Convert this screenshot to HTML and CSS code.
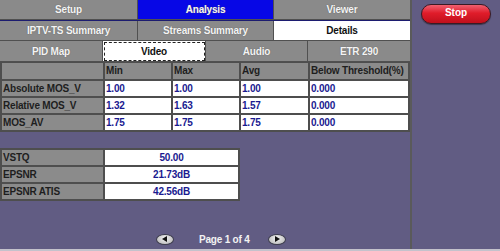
FILE: index.html
```html
<!DOCTYPE html>
<html lang="en">
<head>
  <title>Video Analysis</title>
  <link rel="stylesheet" href="styles.css">
</head>
<body>
  <div class="screen">
    <div class="panel">
      <div class="tabs tabs-3 top-row">
        <div class="tab">Setup</div>
        <div class="tab tab-blue">Analysis</div>
        <div class="tab">Viewer</div>
      </div>
      <div class="tabs tabs-3">
        <div class="tab">IPTV-TS Summary</div>
        <div class="tab">Streams Summary</div>
        <div class="tab tab-white">Details</div>
      </div>
      <div class="tabs tabs-4">
        <div class="tab">PID Map</div>
        <div class="tab tab-white tab-focus">Video</div>
        <div class="tab">Audio</div>
        <div class="tab">ETR 290</div>
      </div>

      <table class="grid mos">
        <tr>
          <th class="label"></th>
          <th>Min</th>
          <th>Max</th>
          <th>Avg</th>
          <th>Below Threshold(%)</th>
        </tr>
        <tr>
          <th class="label">Absolute MOS_V</th>
          <td>1.00</td>
          <td>1.00</td>
          <td>1.00</td>
          <td>0.000</td>
        </tr>
        <tr>
          <th class="label">Relative MOS_V</th>
          <td>1.32</td>
          <td>1.63</td>
          <td>1.57</td>
          <td>0.000</td>
        </tr>
        <tr>
          <th class="label">MOS_AV</th>
          <td>1.75</td>
          <td>1.75</td>
          <td>1.75</td>
          <td>0.000</td>
        </tr>
      </table>

      <table class="grid snr">
        <tr>
          <th class="label">VSTQ</th>
          <td>50.00</td>
        </tr>
        <tr>
          <th class="label">EPSNR</th>
          <td>21.73dB</td>
        </tr>
        <tr>
          <th class="label">EPSNR ATIS</th>
          <td>42.56dB</td>
        </tr>
      </table>

      <div class="pager">
        <span class="arrow arrow-left"></span>
        <span class="page-text">Page 1 of 4</span>
        <span class="arrow arrow-right"></span>
      </div>
    </div>

    <div class="side">
      <button class="stop">Stop</button>
    </div>
  </div>
  <div class="bottom-strip"></div>
</body>
</html>
```

FILE: styles.css
```css
body {
  margin: 0;
  padding: 0;
  background-color: #615c83;
  font-family: "Liberation Sans", Arial, sans-serif;
  font-size: 10px;
  font-weight: bold;
  letter-spacing: -0.2px;
  height: 251px;
  overflow: hidden;
}

.screen {
  display: flex;
  height: 249px;
}

.panel {
  width: 410px;
  border-right: 2px solid #5a5a5a;
  display: flex;
  flex-direction: column;
}

.tabs {
  display: grid;
  background: #4a4a4a;
}

.tabs-3 {
  grid-template-columns: 138px 136px 136px;
  height: 20px;
}

.tabs-4 {
  grid-template-columns: 103px 103px 102px 102px;
  height: 21px;
}

.top-row {
  height: 20px;
  border-bottom: 1px solid #1c1c70;
}

.tab {
  background: #8a8a8a;
  color: #f4f4f4;
  display: flex;
  align-items: center;
  justify-content: center;
  border-right: 1px solid #505050;
  border-bottom: 1px solid #505050;
  text-shadow: 0 0 1px #555;
}

.tab:last-child {
  border-right: none;
}

.tab-blue {
  background: #0707e6;
}

.tab-white {
  background: #ffffff;
  color: #111;
  text-shadow: none;
}

.tab-focus {
  outline: 1px dashed #222;
  outline-offset: -2px;
}

.grid {
  border-collapse: collapse;
  table-layout: fixed;
}

.grid tr {
  height: 17px;
}

.grid th,
.grid td {
  border: 2px solid #4e4e4e;
  padding: 0 1px;
  text-align: left;
  white-space: nowrap;
}

.grid th {
  background: #8b8b8b;
  color: #1e1e1e;
}

.grid td {
  background: #ffffff;
  color: #1a1a90;
}

.mos {
  width: 410px;
}

.mos th:nth-child(1) { width: 99px; }
.mos th:nth-child(2) { width: 64px; }
.mos th:nth-child(3) { width: 64px; }
.mos th:nth-child(4) { width: 65px; }

.mos tr:first-child th {
  border-top: 1px solid #4e4e4e;
}

.snr {
  width: 240px;
  margin-top: 16px;
}

.snr th {
  width: 99px;
}

.snr td {
  text-align: center;
}

.pager {
  margin-top: auto;
  margin-bottom: 4px;
  display: flex;
  align-items: center;
  padding-left: 156px;
  color: #f2f2f2;
  height: 12px;
}

.page-text {
  margin: 0 18px 0 25px;
}

.arrow {
  width: 16px;
  height: 9px;
  border-radius: 50%;
  background: radial-gradient(ellipse at 50% 35%, #f4f4f4, #b0b0b0);
  border: 1px solid #404050;
  position: relative;
}

.arrow::after {
  content: "";
  position: absolute;
  top: 1px;
  border-top: 3.5px solid transparent;
  border-bottom: 3.5px solid transparent;
}

.arrow-left::after {
  left: 5px;
  border-right: 5px solid #111;
}

.arrow-right::after {
  left: 6px;
  border-left: 5px solid #111;
}

.side {
  flex: 1;
  padding: 4px 0 0 9px;
}

.stop {
  width: 70px;
  height: 20px;
  border-radius: 10px;
  border: 1px solid #3a1a24;
  background: linear-gradient(#f06070 0%, #e01c2a 45%, #c0101c 100%);
  color: #ffffff;
  font-family: "Liberation Sans", Arial, sans-serif;
  font-weight: bold;
  font-size: 10px;
  padding: 0 0 3px 0;
  box-shadow: 0 1px 1px rgba(0, 0, 0, 0.4);
}

.bottom-strip {
  height: 2px;
  background: #c4c2cc;
}
```
